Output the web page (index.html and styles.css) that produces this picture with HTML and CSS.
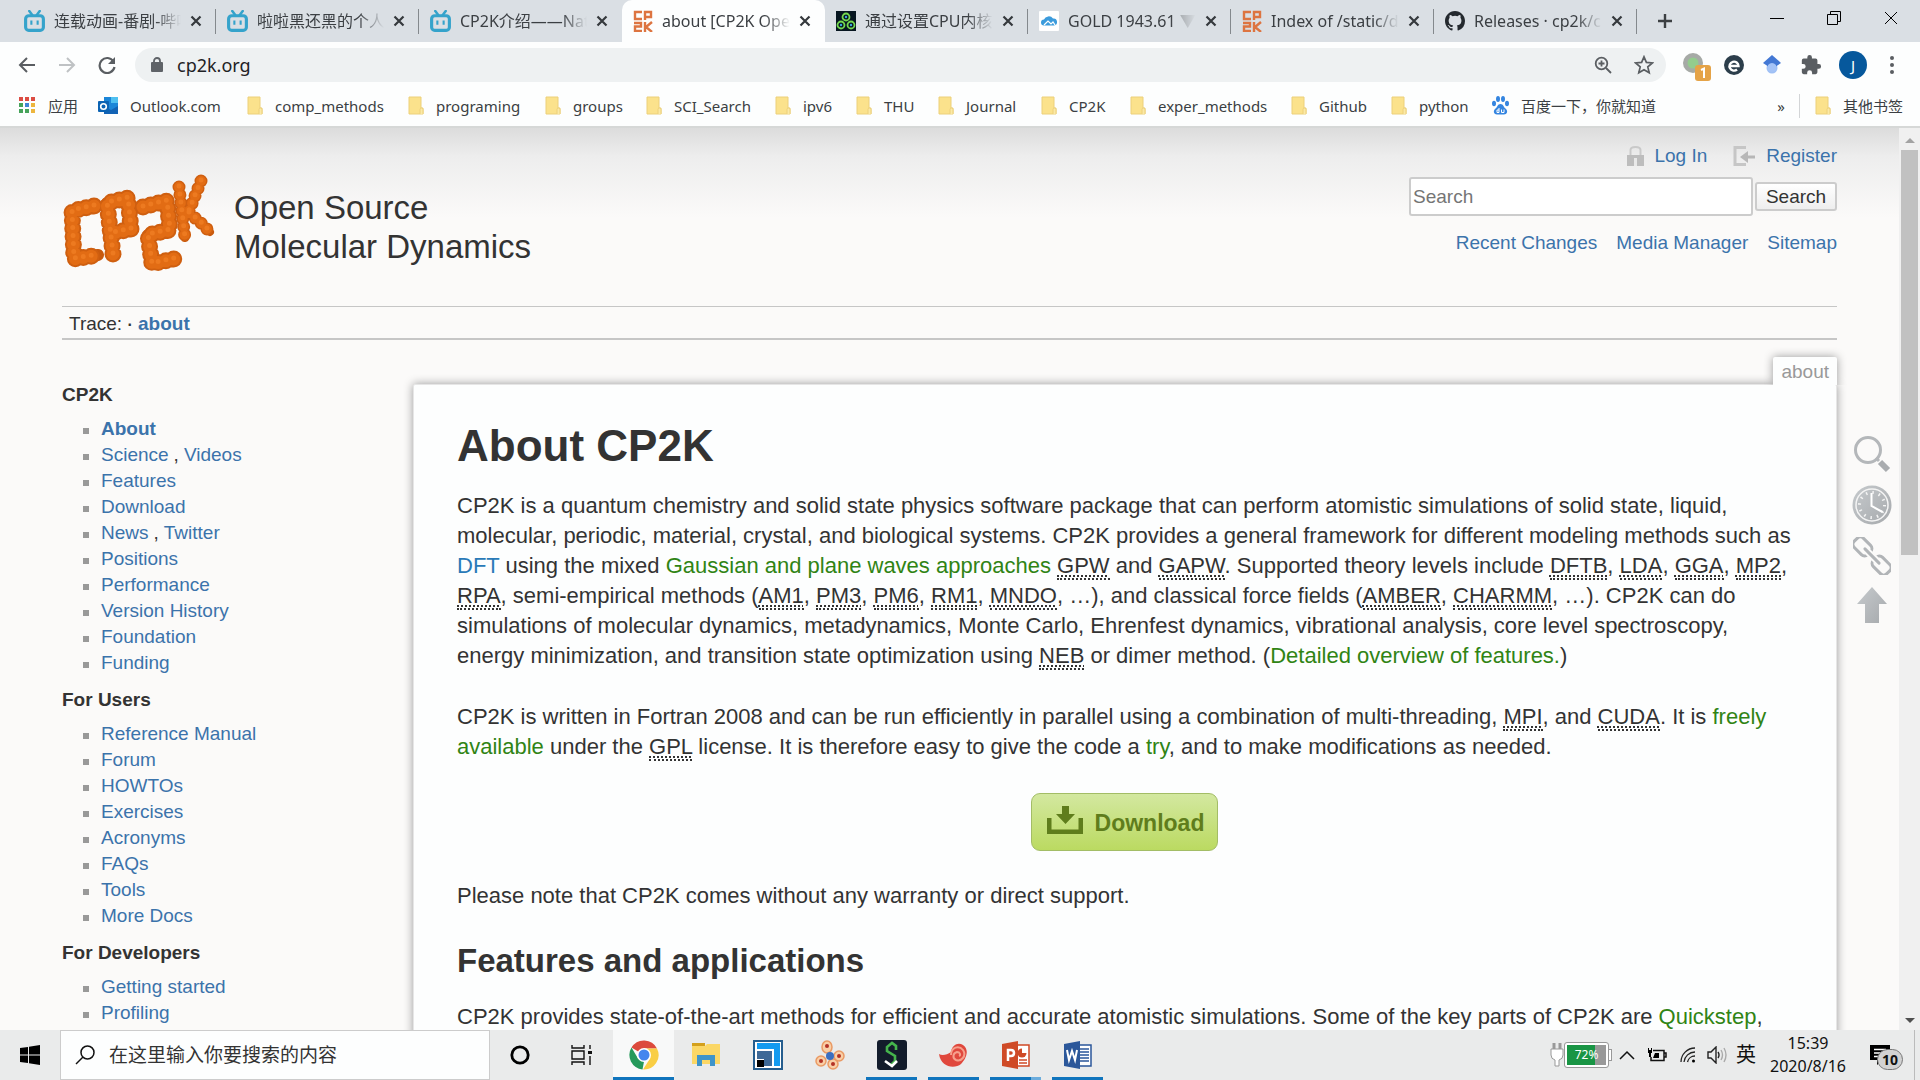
FILE: index.html
```html
<!DOCTYPE html>
<html lang="zh-CN">
<head>
<meta charset="utf-8">
<title>about [CP2K Open Source Molecular Dynamics]</title>
<link rel="stylesheet" href="styles.css">
</head>
<body>
<svg class="defs" width="0" height="0" aria-hidden="true">
  <defs>
    <linearGradient id="grey" x1="0" y1="0" x2="1" y2="1"><stop offset="0" stop-color="#c6cacd"/><stop offset="1" stop-color="#a6a9ac"/></linearGradient>
    <symbol id="bili" viewBox="0 0 20 22"><path d="M5 1l3 4M15 1l-3 4" stroke="#35a3cb" stroke-width="2.4" stroke-linecap="round"/><rect x="1.500" y="5.500" width="17" height="14" rx="3" fill="none" stroke="#35a3cb" stroke-width="3"/><path d="M7 10v4M13 10v4" stroke="#35a3cb" stroke-width="2"/></symbol>
    <symbol id="folder" viewBox="0 0 16 19"><path d="M1 1h12v11h2v6H1z" fill="#fbe28c" stroke="#ecd07a"/><path d="M12 18v-4.500q0-1.500 1.500-1.500t1.500 1.500V18" fill="#fbe9a6" stroke="#ecd07a"/></symbol>
    <symbol id="cp" viewBox="0 0 20 22"><g fill="none" stroke="#dd7440" stroke-width="2.400"><path d="M9 2H2v7h7M12 10V2h6v5h-6M1 13h7v3.500H2V21h7M12 12v10M19 12l-6 5 6 5"/></g></symbol>
    <symbol id="x" viewBox="0 0 12 12"><path d="M1.500 1.500l9 9M10.500 1.500l-9 9" stroke="#35393d" stroke-width="2.200"/></symbol>
  </defs>
</svg>

<div class="browser">
  <nav class="tabs" aria-label="Tabs">
    <div class="tab"><svg width="21" height="23"><use href="#bili"/></svg><span class="tab-title">连载动画-番剧-哔哩</span><button aria-label="Close"><svg width="12" height="12"><use href="#x"/></svg></button></div>
    <div class="tab"><svg width="21" height="23"><use href="#bili"/></svg><span class="tab-title">啦啦黑还黑的个人空间</span><button aria-label="Close"><svg width="12" height="12"><use href="#x"/></svg></button></div>
    <div class="tab before"><svg width="21" height="23"><use href="#bili"/></svg><span class="tab-title">CP2K介绍——Nature</span><button aria-label="Close"><svg width="12" height="12"><use href="#x"/></svg></button></div>
    <div class="tab active"><svg width="20" height="22"><use href="#cp"/></svg><span class="tab-title">about [CP2K Open S</span><button aria-label="Close"><svg width="12" height="12"><use href="#x"/></svg></button></div>
    <div class="tab"><svg width="20" height="20" viewBox="0 0 20 20"><rect width="20" height="20" fill="#071620"/><g fill="none" stroke="#74d94f" stroke-width="1.800"><circle cx="10" cy="6" r="3.500"/><circle cx="5" cy="14" r="3.500"/><circle cx="15" cy="14" r="3.500"/></g><g fill="#3aa7e0"><circle cx="10" cy="6" r="1.200"/><circle cx="5" cy="14" r="1.200"/><circle cx="15" cy="14" r="1.200"/></g></svg><span class="tab-title">通过设置CPU内核数</span><button aria-label="Close"><svg width="12" height="12"><use href="#x"/></svg></button></div>
    <div class="tab"><svg width="20" height="20" viewBox="0 0 20 20"><rect width="20" height="20" rx="1" fill="#fff"/><path d="M5 14.500a3 3 0 010-6 5 4.500 0 019-1 3.500 3.500 0 011 7z" fill="#3b9bdc"/><path d="M5 14l4-4 3 3 2-2 2 3" fill="none" stroke="#fff" stroke-width="1.200"/></svg><span class="tab-title">GOLD 1943.61 <i>▼</i></span><button aria-label="Close"><svg width="12" height="12"><use href="#x"/></svg></button></div>
    <div class="tab"><svg width="20" height="22"><use href="#cp"/></svg><span class="tab-title">Index of /static/do</span><button aria-label="Close"><svg width="12" height="12"><use href="#x"/></svg></button></div>
    <div class="tab"><svg width="20" height="20" viewBox="0 0 16 16"><path fill="#24292e" d="M8 0C3.580 0 0 3.580 0 8c0 3.540 2.290 6.530 5.470 7.590.4.070.55-.17.55-.38v-1.490c-2.010.37-2.530-.49-2.690-.94-.09-.23-.48-.94-.82-1.130-.28-.15-.68-.52-.01-.53.63-.01 1.080.58 1.230.82.72 1.210 1.870.87 2.330.66.07-.52.28-.87.51-1.070-1.780-.2-3.640-.89-3.640-3.950 0-.87.31-1.590.82-2.150-.08-.2-.36-1.020.08-2.120 0 0 .67-.21 2.200.82a7.500 7.500 0 014 0c1.530-1.040 2.200-.82 2.200-.82.44 1.100.16 1.920.08 2.120.51.56.82 1.270.82 2.150 0 3.070-1.870 3.750-3.650 3.950.29.25.54.73.54 1.480v2.200c0 .21.15.46.55.38A8 8 0 0016 8c0-4.420-3.580-8-8-8z"/></svg><span class="tab-title">Releases · cp2k/cp2k</span><button aria-label="Close"><svg width="12" height="12"><use href="#x"/></svg></button></div>
    <button class="newtab" aria-label="New tab"><svg width="16" height="16"><path d="M8 1v14M1 8h14" stroke="#3c4043" stroke-width="2.400"/></svg></button>
    <div class="window-buttons">
      <button aria-label="Minimize"><svg width="14" height="14"><path d="M0 7.500h14" stroke="#000"/></svg></button>
      <button aria-label="Restore"><svg width="14" height="14" fill="none" stroke="#000"><path d="M.5 3.500h10v10H.5zM3.500 3V.5h10v10H11"/></svg></button>
      <button aria-label="Close window"><svg width="14" height="14" stroke="#000"><path d="M1 1l12 12M13 1L1 13"/></svg></button>
    </div>
  </nav>

  <div class="toolbar">
    <button aria-label="Back"><svg width="18" height="18" fill="none" stroke="#5a5e62" stroke-width="2"><path d="M17 9H2M9 2L2 9l7 7"/></svg></button>
    <button aria-label="Forward"><svg width="18" height="18" fill="none" stroke="#bfc2c4" stroke-width="2"><path d="M1 9h15M9 2l7 7-7 7"/></svg></button>
    <button aria-label="Reload"><svg width="18" height="18" fill="none" stroke="#5a5e62" stroke-width="2.200"><path d="M15.500 5.500A7.500 7.500 0 1016.500 11"/><path d="M17 1v7h-7z" fill="#5a5e62" stroke="none"/></svg></button>
    <div class="omnibox">
      <svg width="12" height="16"><rect y="5" width="12" height="10" rx="1" fill="#5f6368"/><path d="M3 6V4a3 3 0 016 0v2" fill="none" stroke="#5f6368" stroke-width="1.800"/></svg>
      <input type="text" value="cp2k.org" aria-label="Address">
      <svg width="18" height="18" fill="none" stroke="#5a5e62" stroke-width="1.800"><circle cx="7.500" cy="7.500" r="5.800"/><path d="M12 12l5 5M4.500 7.500h6M7.500 4.500v6"/></svg>
      <svg class="star" width="20" height="20" viewBox="0 0 20 20"><path d="M10 1.800l2.400 5.600 6 .5-4.600 4 1.400 5.900-5.200-3.100-5.200 3.100 1.400-5.900-4.600-4 6-.5z" fill="none" stroke="#5a5e62" stroke-width="1.700"/></svg>
    </div>
    <div class="extensions">
      <svg width="28" height="32"><circle cx="10" cy="14" r="10" fill="#a6aaa6"/><circle cx="10" cy="14" r="5.500" fill="#93cc8d"/><rect x="12" y="16" width="16" height="16" rx="3" fill="#e5a347"/><path d="M18 21l3-1.500V29" fill="none" stroke="#fff" stroke-width="2"/></svg>
      <svg width="20" height="22"><circle cx="10" cy="11" r="10" fill="#2c3e4b"/><path d="M6 12h8.500a4.500 4.500 0 10-1.500 3.500" fill="none" stroke="#fff" stroke-width="2.400"/></svg>
      <svg width="18" height="22"><circle cx="9" cy="14" r="5.500" fill="#9fc0f5"/><path d="M9 1l9 8-9 6-9-6z" fill="#4378d4"/><path d="M5 11q4-4 8 0v5a5 5 0 01-8 0z" fill="#a4c3f7"/></svg>
      <svg width="22" height="22" viewBox="0 0 24 24"><path fill="#5a5e62" d="M20.500 11H19V7a2 2 0 00-2-2h-4V3.500a2.500 2.500 0 00-5 0V5H4a2 2 0 00-2 2v3.800h1.500a2.700 2.700 0 010 5.400H2V20a2 2 0 002 2h3.800v-1.500a2.700 2.700 0 015.400 0V22H17a2 2 0 002-2v-4h1.500a2.500 2.500 0 000-5z"/></svg>
      <button class="avatar" aria-label="Profile">J</button>
      <svg class="menu" width="4" height="18" fill="#5a5e62"><circle cx="2" cy="2" r="2"/><circle cx="2" cy="9" r="2"/><circle cx="2" cy="16" r="2"/></svg>
    </div>
  </div>

  <nav class="bookmarks" aria-label="Bookmarks">
    <a href="#"><svg width="17" height="17"><g><path d="M0 0h4v4H0zM6 0h4v4H6zM12 0h4v4h-4z" fill="#dc4d43"/><path d="M0 6h4v4H0zM0 12h4v4H0z" fill="#46a35a"/><path d="M6 6h4v4H6z" fill="#4285d6"/><path d="M12 6h4v4h-4zM12 12h4v4h-4z" fill="#edb63e"/><path d="M6 12h4v4H6z" fill="#46a35a"/></g></svg>应用</a>
    <a href="#"><svg width="20" height="18"><path d="M6 0h14v17H6z" fill="#1b86d8"/><path d="M13 0h7v6h-7z" fill="#4fc0f0"/><path d="M6 9l7 4 7-4v8H6z" fill="#1263b5"/><rect y="4" width="11" height="11" rx="1" fill="#0b63b3"/><circle cx="5.500" cy="9.500" r="2.800" fill="none" stroke="#fff" stroke-width="1.600"/></svg>Outlook.com</a>
    <a href="#"><svg width="16" height="19"><use href="#folder"/></svg>comp_methods</a>
    <a href="#"><svg width="16" height="19"><use href="#folder"/></svg>programing</a>
    <a href="#"><svg width="16" height="19"><use href="#folder"/></svg>groups</a>
    <a href="#"><svg width="16" height="19"><use href="#folder"/></svg>SCI_Search</a>
    <a href="#"><svg width="16" height="19"><use href="#folder"/></svg>ipv6</a>
    <a href="#"><svg width="16" height="19"><use href="#folder"/></svg>THU</a>
    <a href="#"><svg width="16" height="19"><use href="#folder"/></svg>Journal</a>
    <a href="#"><svg width="16" height="19"><use href="#folder"/></svg>CP2K</a>
    <a href="#"><svg width="16" height="19"><use href="#folder"/></svg>exper_methods</a>
    <a href="#"><svg width="16" height="19"><use href="#folder"/></svg>Github</a>
    <a href="#"><svg width="16" height="19"><use href="#folder"/></svg>python</a>
    <a href="#"><svg width="17" height="19" fill="#3585e0"><ellipse cx="2" cy="7.500" rx="2" ry="2.800"/><ellipse cx="6" cy="3" rx="2" ry="2.900"/><ellipse cx="11" cy="3" rx="2" ry="2.900"/><ellipse cx="15" cy="7.500" rx="2" ry="2.800"/><path d="M8.500 8c3 0 3 3 5 4.500 3 2.500 1.500 6-1.500 6H5c-3 0-4.500-3.500-1.500-6C5.500 11 5.500 8 8.500 8z"/><path d="M7 12v4.500H5v-2.500h2M9.500 13.500v3H12v-3" fill="none" stroke="#fff" stroke-width="1"/></svg>百度一下，你就知道</a>
    <button class="more" aria-label="More bookmarks">»</button>
    <a class="other" href="#"><svg width="16" height="19"><use href="#folder"/></svg>其他书签</a>
  </nav>
</div>

<div class="viewport">
  <div class="site">
    <header class="header">
      <div class="headline">
        <svg class="logo" width="157" height="102" viewBox="0 0 157 102" role="img" aria-label="CP2K">
          <g fill="none" stroke-linecap="round" stroke-linejoin="round">
            <g stroke="#c85a0e" stroke-width="12">
              <path d="M32 33L10 38l2 48 24-4"/><path d="M51 81L45 30l21-5 3 31-18 4"/><path d="M81 34l24-6 3 29-22 5 4 29 22-5"/><path d="M117 14l6 51M139 8l-12 30M127 40l12 10 9 9" stroke-width="8"/>
            </g>
            <g stroke="#cf5f10" stroke-dasharray="0 8" stroke-width="17">
              <path d="M32 33L10 38l2 48 24-4"/><path d="M51 81L45 30l21-5 3 31-18 4"/><path d="M81 34l24-6 3 29-22 5 4 29 22-5"/><path d="M117 14l6 51M139 8l-12 30M127 40l12 10 9 9" stroke-width="13"/>
            </g>
            <g stroke="#e26c14" stroke-dasharray="0 8" stroke-width="13">
              <path d="M32 33L10 38l2 48 24-4"/><path d="M51 81L45 30l21-5 3 31-18 4"/><path d="M81 34l24-6 3 29-22 5 4 29 22-5"/><path d="M117 14l6 51M139 8l-12 30M127 40l12 10 9 9" stroke-width="10"/>
            </g>
            <g stroke="#ed7a20" stroke-dasharray="0 8" stroke-width="5">
              <path d="M32 32L10 37l2 48 24-4"/><path d="M51 80L45 29l21-5 3 31-18 4"/><path d="M81 33l24-6 3 29-22 5 4 29 22-5"/><path d="M117 13l6 51M139 7l-12 30M127 39l12 10 9 9"/>
            </g>
          </g>
        </svg>
        <p class="tagline">Open Source<br>Molecular Dynamics</p>
      </div>
      <div class="tools">
        <div class="tool-links user">
          <a href="#"><svg width="17" height="20"><path d="M3.500 9V4q0-3 5-3t5 3v5" fill="none" stroke="#c9c9c9" stroke-width="2"/><path d="M0 9h17v11H0z" fill="#bdbdbd"/><path d="M7 12h3v8H7z" fill="#e9e9e9"/></svg>Log In</a>
          <a href="#"><svg width="23" height="20"><path d="M13 1.500H2v17h11" fill="none" stroke="#c6c6c6" stroke-width="3"/><path d="M22 11H11" stroke="#b7b7b7" stroke-width="3"/><path d="M15 5v12l-8-6z" fill="#b7b7b7"/></svg>Register</a>
        </div>
        <form class="search"><input type="search" placeholder="Search" aria-label="Search"><button type="button">Search</button></form>
        <div class="tool-links"><a href="#">Recent Changes</a><a href="#">Media Manager</a><a href="#">Sitemap</a></div>
      </div>
    </header>
    <div class="trace">Trace: <b class="dot">·</b> <a href="#"><b>about</b></a></div>

    <div class="wrapper">
      <aside class="sidebar">
        <h3>CP2K</h3>
        <ul>
          <li><a href="#"><b>About</b></a></li>
          <li><a href="#">Science</a> , <a href="#">Videos</a></li>
          <li><a href="#">Features</a></li>
          <li><a href="#">Download</a></li>
          <li><a href="#">News</a> , <a href="#">Twitter</a></li>
          <li><a href="#">Positions</a></li>
          <li><a href="#">Performance</a></li>
          <li><a href="#">Version History</a></li>
          <li><a href="#">Foundation</a></li>
          <li><a href="#">Funding</a></li>
        </ul>
        <h3>For Users</h3>
        <ul>
          <li><a href="#">Reference Manual</a></li>
          <li><a href="#">Forum</a></li>
          <li><a href="#">HOWTOs</a></li>
          <li><a href="#">Exercises</a></li>
          <li><a href="#">Acronyms</a></li>
          <li><a href="#">FAQs</a></li>
          <li><a href="#">Tools</a></li>
          <li><a href="#">More Docs</a></li>
        </ul>
        <h3>For Developers</h3>
        <ul>
          <li><a href="#">Getting started</a></li>
          <li><a href="#">Profiling</a></li>
        </ul>
      </aside>

      <main class="page">
        <div class="page-id">about</div>
        <h1>About CP2K</h1>
        <p>CP2K is a quantum chemistry and solid state physics software package that can perform atomistic simulations of solid state, liquid, molecular, periodic, material, crystal, and biological systems. CP2K provides a general framework for different modeling methods such as <a href="#">DFT</a> using the mixed <a class="wiki" href="#">Gaussian and plane waves approaches</a> <abbr>GPW</abbr> and <abbr>GAPW</abbr>. Supported theory levels include <abbr>DFTB</abbr>, <abbr>LDA</abbr>, <abbr>GGA</abbr>, <abbr>MP2</abbr>, <abbr>RPA</abbr>, semi-empirical methods (<abbr>AM1</abbr>, <abbr>PM3</abbr>, <abbr>PM6</abbr>, <abbr>RM1</abbr>, <abbr>MNDO</abbr>, …), and classical force fields (<abbr>AMBER</abbr>, <abbr>CHARMM</abbr>, …). CP2K can do simulations of molecular dynamics, metadynamics, Monte Carlo, Ehrenfest dynamics, vibrational analysis, core level spectroscopy, energy minimization, and transition state optimization using <abbr>NEB</abbr> or dimer method. (<a class="wiki" href="#">Detailed overview of features.</a>)</p>
        <p>CP2K is written in Fortran 2008 and can be run efficiently in parallel using a combination of multi-threading, <abbr>MPI</abbr>, and <abbr>CUDA</abbr>. It is <a class="wiki" href="#">freely available</a> under the <abbr>GPL</abbr> license. It is therefore easy to give the code a <a class="wiki" href="#">try</a>, and to make modifications as needed.</p>
        <div class="download-row"><a class="download" href="#"><svg width="36" height="28"><path d="M2 12v14h32V12" fill="none" stroke="#5f7d1c" stroke-width="5"/><path d="M15 0h7v8h6l-9.500 10L9 8h6z" fill="#5f7d1c"/></svg>Download</a></div>
        <p class="note">Please note that CP2K comes without any warranty or direct support.</p>
        <h2>Features and applications</h2>
        <p>CP2K provides state-of-the-art methods for efficient and accurate atomistic simulations. Some of the key parts of CP2K are <a class="wiki" href="#">Quickstep</a>,</p>
      </main>

      <nav class="page-tools" aria-label="Page tools">
        <a href="#" aria-label="Show"><svg width="38" height="38" fill="none"><circle cx="15" cy="15" r="12.500" stroke="#b4b7ba" stroke-width="3"/><path d="M23 23l3 3" stroke="#b4b7ba" stroke-width="3"/><path d="M27 27l8 8" stroke="#a9acaf" stroke-width="6"/></svg></a>
        <a href="#" aria-label="Old revisions"><svg width="40" height="40" viewBox="0 0 40 40"><circle cx="20" cy="20" r="19.500" fill="url(#grey)"/><circle cx="20" cy="20" r="16" fill="none" stroke="#f4f4f4" stroke-width="1.500"/><circle cx="20" cy="20" r="12.500" fill="none" stroke="#f4f4f4" stroke-width="3" stroke-dasharray="1.500 5.045"/><path d="M19.500 8v13l11 6" fill="none" stroke="#fff" stroke-width="2"/></svg></a>
        <a href="#" aria-label="Backlinks"><svg width="38" height="38" viewBox="0 0 38 38"><g transform="rotate(45 19 19)" fill="none" stroke="#b1b4b7" stroke-width="3"><rect x="-4" y="12.500" width="19" height="13" rx="4.500"/><rect x="23" y="12.500" width="19" height="13" rx="4.500"/><path d="M9 19h20" stroke="#fbfaf9" stroke-width="7"/><path d="M9 19h20" stroke-linecap="round"/></g></svg></a>
        <a href="#" aria-label="Back to top"><svg width="30" height="36"><path d="M15 0l15 17h-8v19H8V17H0z" fill="url(#grey)"/></svg></a>
      </nav>
    </div>
  </div>
  <div class="scrollbar" aria-hidden="true">
    <svg width="10" height="6"><path d="M0 6l5-5 5 5z" fill="#a3a3a3"/></svg>
    <div class="thumb"></div>
    <svg width="10" height="6"><path d="M0 0l5 5 5-5z" fill="#505050"/></svg>
  </div>
</div>

<footer class="taskbar">
  <button class="start" aria-label="Start"><svg width="20" height="20"><path d="M0 3l8-1v7.500H0zM9 1.800L20 0v9.500H9zM0 10.500h8V18l-8-1zM9 10.500h11V20L9 18.200z"/></svg></button>
  <label class="task-search"><svg width="20" height="20" fill="none" stroke="#111" stroke-width="1.500"><circle cx="12.500" cy="7.500" r="6.500"/><path d="M8 12l-7 7"/></svg><input type="text" placeholder="在这里输入你要搜索的内容" aria-label="搜索"></label>
  <div class="apps">
    <button aria-label="Cortana"><svg width="20" height="20"><circle cx="10" cy="10" r="8.200" fill="none" stroke="#000" stroke-width="2.800"/></svg></button>
    <button aria-label="Task view"><svg width="22" height="20" fill="none" stroke="#111" stroke-width="1.400"><path d="M1 0v3h12V0M1 20v-3h12v3M1 6h12v8H1zM19 0v4M19 11v9"/><path d="M17 6h4v3h-4z" fill="#111" stroke="none"/></svg></button>
    <button class="current" aria-label="Chrome"><svg width="30" height="30" viewBox="0 0 30 30"><path d="M15 15L2.500 7.500A14.500 14.500 0 0128 8.500H15z" fill="#dc4a3c"/><path d="M15 8.500h13A14.500 14.500 0 0114 29.500l7-11z" fill="#f9ce45"/><path d="M2.500 7.500l6.500 11 6 3-1.500 8A14.500 14.500 0 012.500 7.500z" fill="#24995a"/><circle cx="15" cy="15" r="7" fill="#fff"/><circle cx="15" cy="15" r="5.500" fill="#4486ee"/></svg></button>
    <button aria-label="Explorer"><svg width="28" height="26"><path d="M0 1h13v4H0z" fill="#d4a01c"/><path d="M0 4h13l2-2h13v20H0z" fill="#fbd766"/><path d="M5 24V13h18v11h-5v-6h-8v6z" fill="#3f94c9"/></svg></button>
    <button aria-label="VMware"><svg width="30" height="30"><rect x="1" y="1" width="28" height="28" fill="#fff" stroke="#255d8e" stroke-width="2"/><path d="M4 3h23v23h-6V9H4z" fill="#139af0"/><path d="M4 11h15v15h-8v-7H4z" fill="#3e6997"/><path d="M4 20h7v7H4z"/></svg></button>
    <button aria-label="Molecule viewer"><svg width="30" height="30"><g fill="#f9cfa6" stroke="#ea9a64" stroke-width="1.500"><ellipse cx="12" cy="7" rx="5" ry="6"/><circle cx="6" cy="21" r="5"/><circle cx="18" cy="24" r="5"/><circle cx="24" cy="16" r="5"/></g><circle cx="15" cy="16" r="4" fill="#3c6fc0"/><g fill="#b43226"><circle cx="12" cy="6" r="2"/><circle cx="6" cy="21" r="2"/><circle cx="18" cy="24" r="2"/><circle cx="24" cy="16" r="2"/></g></svg></button>
    <button class="open" aria-label="SecureCRT"><svg width="30" height="30"><rect width="30" height="30" rx="3" fill="#131c2b"/><path d="M19 10V6l-4-3-5 4v4l8 5v5l-4 4" fill="none" stroke="#45b44c" stroke-width="2.600"/><path d="M8 21l7 5 5-5" fill="none" stroke="#fff" stroke-width="2.600"/></svg></button>
    <button class="open" aria-label="Nautilus"><svg width="30" height="28"><path d="M0 13c3 2 8 1 12-2 1-7 7-10 12-7 7 5 3 14-2 19-6 5-20 4-22-10z" fill="#e0483d"/><path d="M12 14c0-8 8-10 12-5 4 6-2 12-7 10-4-2-3-7 1-8 3 0 4 3 2 4" fill="none" stroke="#f6a08c" stroke-width="2"/></svg></button>
    <button class="open grouped" aria-label="PowerPoint"><svg width="28" height="28"><path d="M14 4h13v21H14z" fill="#fff" stroke="#cf4a26" stroke-width="1.500"/><path d="M17 19h8M17 22h8" stroke="#cf4a26" stroke-width="1.500"/><circle cx="20" cy="12" r="4.500" fill="#cf4a26"/><path d="M20 12V7h5v5z" fill="#fff"/><path d="M0 3l16-3v28L0 25z" fill="#cf4a26"/><path d="M6 20V9h3q3 0 3 3t-3 3H6" fill="none" stroke="#fff" stroke-width="2.500"/></svg></button>
    <button class="open" aria-label="Word"><svg width="28" height="28"><path d="M14 4h13v21H14z" fill="#fff" stroke="#2b579a" stroke-width="1.500"/><path d="M16 8h9M16 11h9M16 14h9M16 17h9M16 20h9" stroke="#2b579a" stroke-width="1.500"/><path d="M0 3l16-3v28L0 25z" fill="#2b579a"/><path d="M3 9l2 10 3-9 3 9 2-10" fill="none" stroke="#fff" stroke-width="2"/></svg></button>
  </div>
  <div class="tray">
    <div class="battery"><svg width="14" height="24"><path d="M4 0v6M10 0v6" stroke="#999" stroke-width="3"/><path d="M1 6h12v6q0 4-4 5v6H5v-6q-4-1-4-5z" fill="#fff" stroke="#999"/></svg><span class="cell">72%</span><i></i></div>
    <svg class="caret" width="16" height="10" fill="none" stroke="#111" stroke-width="1.500"><path d="M1 9l7-7 7 7"/></svg>
    <svg class="plug" width="20" height="14"><path d="M6 2.500h11v10H4V9M17 5h2v4h-2" fill="none" stroke="#111" stroke-width="1.500"/><path d="M8 5h4v5H6zM1 0h1v2h2V0h1v5H4v4H2V5H1z"/></svg>
    <svg class="wifi" width="16" height="16" fill="none" stroke="#222" stroke-width="1.300"><path d="M1 15A14 14 0 0115 1M4 15A11 11 0 0115 5M7.500 15A7.500 7.500 0 0115 9"/><circle cx="13.500" cy="14" r="1.500" fill="#000" stroke="none"/></svg>
    <svg class="volume" width="21" height="18" fill="none" stroke="#222" stroke-width="1.400"><path d="M1 6h3l5-5v16l-5-5H1zM11 6q2 3 0 6"/><path d="M14 4q3 5 0 10M17 2q4 7 0 14" stroke="#aaa"/></svg>
    <span class="ime">英</span>
    <time class="clock">15:39<br>2020/8/16</time>
    <button class="notes" aria-label="Notifications"><svg width="20" height="20"><path d="M0 0h20v15h-8l-5 5v-5H0z"/><path d="M4 4.500h12M4 8h12M4 11.500h8" stroke="#fff" stroke-width="1.300"/></svg><b>10</b></button>
  </div>
</footer>
</body>
</html>
```
FILE: styles.css
```css
* { box-sizing: border-box; }
body { margin: 0; height: 100vh; display: flex; flex-direction: column; overflow: hidden; background: #fbfaf9; color: #333; font-family: "Liberation Sans", Arial, sans-serif; font-size: 19px; line-height: 26px; }
button, input { font: inherit; color: inherit; border: 0; background: none; padding: 0; }
svg { display: block; flex: none; }
a { color: #3b73ab; text-decoration: none; }
.defs { position: absolute; }

/* Browser frame */
.browser, .taskbar { font-family: "Noto Sans", "Noto Sans CJK SC", sans-serif; font-size: 16px; line-height: 24px; color: #3b3f43; flex: none; }
.browser { background: #fdfefe; border-bottom: 2px solid #d6d8d7; }
.tabs { display: flex; height: 42px; background: #dadfe4; padding-left: 13px; }
.tab { position: relative; flex: 0 1 203px; min-width: 0; display: flex; align-items: center; gap: 9px; padding: 0 14px 0 11px; }
.tab::after { content: ""; position: absolute; right: 0; top: 9px; height: 25px; width: 1px; background: #84898d; }
.tab.active { background: #fdfefe; border-radius: 10px 10px 0 0; }
.tab.active::after, .tab.before::after { display: none; }
.tab-title { flex: 1; overflow: hidden; white-space: nowrap; mask-image: linear-gradient(90deg, #000 80%, transparent 100%); }
.tab-title i { font-style: normal; color: #8b8f92; }
.newtab { padding: 0 20px; }
.window-buttons { margin-left: auto; display: flex; align-items: flex-start; padding-right: 1px; }
.window-buttons button { width: 57px; height: 36px; display: grid; place-items: center; }
.toolbar { display: flex; align-items: center; height: 45px; padding: 0 26px 0 18px; gap: 22px; }
.omnibox { flex: 1; display: flex; align-items: center; height: 34px; margin-left: -3px; padding: 0 12px 0 16px; gap: 14px; border-radius: 17px; background: #eef1f2; }
.omnibox input { flex: 1; font-size: 18px; color: #1f2225; }
.omnibox .star { margin-left: 8px; }
.extensions { display: flex; align-items: center; gap: 19px; margin-left: -5px; }
.extensions svg:first-child { margin-right: -6px; }
.extensions .menu { margin-left: 4px; }
.avatar { width: 28px; height: 28px; border-radius: 50%; background: #06589c; color: #fff; font-size: 15px; margin-left: -2px; }
.bookmarks { display: grid; grid-template-columns: 79px 149px 161px 137px 101px 129px 81px 82px 103px 89px 161px 100px 101px auto 1fr auto; height: 39px; align-items: center; padding: 0 17px 2px 19px; font-size: 15px; }
.bookmarks a { display: flex; align-items: center; gap: 12px; color: inherit; white-space: nowrap; }
.more { justify-self: end; padding-right: 14px; }
.bookmarks .other { border-left: 1px solid #d3d5d7; padding-left: 15px; }

/* Site */
.viewport { flex: 1; min-height: 0; display: flex; }
.site { flex: 1; min-width: 0; padding: 15px 62px 0; overflow: hidden; background: linear-gradient(#dcdcdc, #ededed 28px, #fbfaf9 90px); }
.header { display: flex; justify-content: space-between; height: 163px; }
.headline { display: flex; gap: 15px; padding-top: 30px; }
.tagline { margin: 15px 0 0; font-size: 33px; line-height: 39px; }
.tools { display: flex; flex-direction: column; align-items: flex-end; }
.tool-links { display: flex; gap: 19px; }
.tool-links.user { gap: 26px; }
.tool-links a { display: flex; align-items: center; gap: 10px; }
.search { display: flex; align-items: center; gap: 2px; margin: 8px 0 14px; }
.search input { width: 344px; height: 39px; border: 2px solid #ccc; border-radius: 3px; background: #fff; padding: 0 2px; }
.search input::placeholder { color: #757575; opacity: 1; }
.search button { height: 29px; width: 82px; border: 2px solid #ccc; border-radius: 3px; background: linear-gradient(#fff, #eee); }
.trace { border-top: 1px solid #c6c6c6; border-bottom: 2px solid #c6c6c6; height: 34px; padding: 4px 7px; }
.dot { font-size: 16px; }
.wrapper { position: relative; display: flex; margin-top: 44px; }
.sidebar { flex: 0 0 351px; }
.sidebar h3 { margin: 11px 0 8px; font-size: 19px; line-height: 26px; }
.sidebar h3:first-child { margin-top: -2px; }
.sidebar ul { margin: 0; padding: 0; list-style: none; }
.sidebar li { display: flex; align-items: center; gap: 5px; padding-left: 21px; }
.sidebar li::before { content: ""; width: 6px; height: 6px; margin: 3px 7px 0 0; background: #999; }
.page { position: relative; flex: 1; min-width: 0; padding: 35px 36px 0 43px; background: #fdfefe; border: 1px solid #e6e6e6; border-radius: 2px; box-shadow: 0 0 10px #999; font-size: 22px; line-height: 30px; }
.page-id { position: absolute; top: -28px; right: -1px; padding: 2px 8px 0; height: 28px; font-size: 19px; line-height: 26px; color: #999; background: #fdfefe; border-radius: 2px 2px 0 0; box-shadow: 0 0 10px #999; clip-path: inset(-10px -10px 0 -10px); }
.page h1 { margin: 0 0 19px; font-size: 44px; line-height: 52px; }
.page h2 { margin: 0 0 21px; font-size: 33px; line-height: 40px; }
.page p { margin: 0 0 31px; }
.page .note { margin-bottom: 30px; }
.page a { color: #2a7ab8; }
.page a.wiki { color: #308414; }
abbr { text-decoration: underline dotted 2px; text-underline-offset: 2px; text-decoration-skip-ink: none; border-bottom: 2px dotted #333; }
.download-row { display: flex; justify-content: center; margin-bottom: 30px; padding-right: 8px; }
.page .download { display: flex; align-items: center; gap: 12px; height: 58px; padding: 2px 13px 0 15px; border: 1px solid #a3bd66; border-radius: 9px; background: linear-gradient(#d3e8a0, #bbda61); color: #5f7d1c; font: bold 23px/30px "Liberation Sans", Arial, sans-serif; }
.page .download svg { margin-top: -6px; }
.page-tools { position: absolute; left: 100%; top: 51px; margin-left: 15px; display: grid; justify-items: center; gap: 12px; width: 40px; }

.scrollbar { flex: 0 0 21px; display: flex; flex-direction: column; align-items: center; padding: 9px 0 6px; background: #f0f0f0; }
.thumb { width: 17px; height: 405px; margin: 7px 0 auto; background: #c1c1c1; }

/* Windows taskbar */
.taskbar { display: flex; height: 50px; background: #eaebeb; color: #111; }
.start { width: 60px; display: grid; place-items: center; }
.task-search { width: 430px; display: flex; align-items: center; gap: 14px; padding: 0 14px; background: #fdfefe; border: 1px solid #ccc; }
.task-search input { flex: 1; font-size: 19px; }
.task-search input::placeholder { color: #333; opacity: 1; }
.apps { display: flex; gap: 1px; margin-left: -1px; }
.apps button { position: relative; width: 61px; display: grid; place-items: center; }
.current { background: #f8f9f9; }
.apps .open::after, .apps .current::after { content: ""; position: absolute; left: 5px; right: 5px; bottom: 0; height: 3px; background: #1075bd; }
.apps .current::after { left: 0; right: 0; }
.apps .grouped::after { background: linear-gradient(90deg, #1075bd 80%, #6caddd 80%); }
.tray { margin-left: auto; display: flex; align-items: center; border-right: 1px solid #bbb; margin-right: 5px; padding-right: 10px; }
.battery { display: flex; align-items: center; }
.cell { width: 43px; height: 24px; border: 2px solid #fff; outline: 1px solid #999; border-radius: 2px; background: linear-gradient(90deg, #199544 72%, #999 72%); color: #fff; font-size: 12px; line-height: 20px; text-align: center; margin-left: 1px; }
.battery i { width: 4px; height: 12px; border: 1px solid #999; background: #fff; }
.caret { margin-left: 7px; }
.plug { margin-left: 12px; }
.wifi { margin-left: 13px; }
.volume { margin-left: 11px; }
.ime { margin-left: 8px; font-size: 20px; }
.clock { margin-left: 14px; text-align: center; font-size: 16px; line-height: 23px; }
.notes { position: relative; margin-left: 24px; width: 34px; height: 30px; }
.notes b { position: absolute; left: 7px; top: 9px; width: 26px; height: 21px; border-radius: 11px; border: 1px solid #777; background: #d2d2d2; font-size: 14px; line-height: 19px; }
```
